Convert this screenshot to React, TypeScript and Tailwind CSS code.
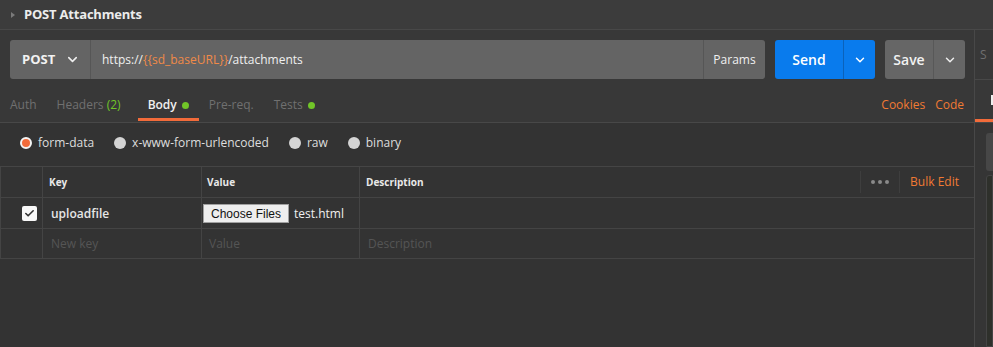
import React from 'react';
import { ChevronDown, Check } from 'lucide-react';

const font = { fontFamily: '"Open Sans", "Liberation Sans", sans-serif' };

const Tab: React.FC<{ label: React.ReactNode; active?: boolean; dot?: boolean; dim?: boolean; extra?: string }> = ({ label, active, dot, dim, extra }) => (
  <div className={`relative flex h-full items-center pl-[10px] ${extra ?? 'pr-[10px]'}`}>
    <span className={`text-[12px] ${active ? 'font-semibold text-[#f0f0f0]' : dim ? 'text-[#707070]' : 'text-[#8c8c8c]'}`}>{label}</span>
    {dot && <span className="ml-[5px] h-[7px] w-[7px] rounded-full bg-[#71c528]" />}
    {active && <span className="absolute bottom-[1px] left-0 right-0 h-[3px] bg-[#f26b3a]" />}
  </div>
);

const Radio: React.FC<{ label: string; on?: boolean }> = ({ label, on }) => (
  <div className="flex items-center gap-[6px]">
    <span
      className={`h-[12px] w-[12px] rounded-full ${on ? 'border-[2px] border-[#f4f4f4] bg-[#f26b3a]' : 'bg-[#d4d4d4]'}`}
    />
    <span className="text-[12px] text-[#dedede]">{label}</span>
  </div>
);

export default function App() {
  return (
    <div className="h-[347px] w-[993px] overflow-hidden bg-[#333333]" style={font}>
      {/* title */}
      <div className="flex h-[30px] items-center border-b border-[#484848] bg-[#3c3c3c] pl-[11px]">
        <span className="mr-[9px] h-0 w-0 border-y-[3px] border-l-[4px] border-y-transparent border-l-[#7a7a7a]" />
        <span className="text-[13px] font-bold tracking-[-0.2px] text-[#ececec]">POST Attachments</span>
      </div>

      <div className="flex h-[317px]">
        {/* main */}
        <div className="flex w-[975px] flex-col border-r border-[#484848]">
          {/* request bar */}
          <div className="flex h-[58px] items-center gap-[10px] bg-[#383838] pl-[10px] pr-[9px] pt-[1px]">
            <div className="flex h-[39px] flex-1 rounded-[3px] bg-[#646464]">
              <div className="flex w-[81px] items-center justify-between border-r border-[#565656] pl-[12px] pr-[10px]">
                <span className="text-[13px] font-bold text-[#f2f2f2]">POST</span>
                <ChevronDown size={15} strokeWidth={2.5} className="text-[#efefef]" />
              </div>
              <div className="flex flex-1 items-center pl-[11px] text-[12px] text-[#f0f0f0]">
                https://<span className="text-[#f08a48]">{'{{sd_baseURL}}'}</span>/attachments
              </div>
              <div className="flex w-[62px] items-center justify-center border-l border-[#565656] text-[12px] text-[#f0f0f0]">
                Params
              </div>
            </div>
            <div className="flex h-[39px] w-[100px] rounded-[3px] bg-[#097bed]">
              <div className="flex w-[69px] items-center justify-center border-r border-[#0a62bb] text-[14px] font-semibold text-white">
                Send
              </div>
              <div className="flex flex-1 items-center justify-center">
                <ChevronDown size={14} strokeWidth={2.5} className="text-white" />
              </div>
            </div>
            <div className="flex h-[39px] w-[80px] rounded-[3px] bg-[#666666]">
              <div className="flex w-[49px] items-center justify-center border-r border-[#585858] text-[14px] font-semibold text-[#f2f2f2]">
                Save
              </div>
              <div className="flex flex-1 items-center justify-center">
                <ChevronDown size={14} strokeWidth={2.5} className="text-[#eeeeee]" />
              </div>
            </div>
          </div>

          {/* tabs */}
          <div className="flex h-[35px] items-stretch border-b border-[#484848] bg-[#383838]">
            <Tab label="Auth" dim />
            <Tab label={<>Headers <span className="text-[#71c528]">(2)</span></>} dim extra="pr-[17px]" />
            <Tab label="Body" active dot />
            <Tab label="Pre-req." dim />
            <Tab label="Tests" dim dot />
            <div className="ml-auto flex items-center gap-[10px] pr-[10px] text-[12px] text-[#f07a33]">
              <span>Cookies</span>
              <span>Code</span>
            </div>
          </div>

          {/* body types */}
          <div className="flex h-[44px] items-center gap-[20px] border-b border-[#454545] pb-[4px] pl-[20px]">
            <Radio label="form-data" on />
            <Radio label="x-www-form-urlencoded" />
            <Radio label="raw" />
            <Radio label="binary" />
          </div>

          {/* table */}
          <div className="grid grid-cols-[42px_159px_158px_1fr] border-l border-[#444444] text-[12px]">
            <div className="h-[31px] border-b border-r border-[#444444]" />
            <div className="flex h-[31px] items-center border-b border-r border-[#444444] pl-[6px] text-[10px] font-bold text-[#e8e8e8]">Key</div>
            <div className="flex h-[31px] items-center border-b border-r border-[#444444] pl-[5px] text-[10px] font-bold text-[#e8e8e8]">Value</div>
            <div className="flex h-[31px] items-center border-b border-[#444444] pl-[6px] text-[10px] font-bold text-[#e8e8e8]">
              <span>Description</span>
              <div className="ml-auto flex h-full items-center pr-[15px]">
                <div className="flex h-[22px] items-center gap-[3px] border-x border-[#3e3e3e] px-[10px]">
                  <span className="h-[4px] w-[4px] rounded-full bg-[#8a8a8a]" />
                  <span className="h-[4px] w-[4px] rounded-full bg-[#8a8a8a]" />
                  <span className="h-[4px] w-[4px] rounded-full bg-[#8a8a8a]" />
                </div>
                <span className="pl-[10px] text-[12px] font-normal text-[#f07a33]">Bulk Edit</span>
              </div>
            </div>

            <div className="flex h-[31px] items-center justify-end border-b border-r border-[#444444] pr-[5px]">
              <span className="flex h-[15px] w-[15px] items-center justify-center rounded-[2px] bg-[#f8f8f8]">
                <Check size={11} strokeWidth={3.5} className="text-[#333333]" />
              </span>
            </div>
            <div className="flex h-[31px] items-center border-b border-r border-[#444444] pl-[8px] pt-[1px] font-semibold text-[#e6e6e6]">uploadfile</div>
            <div className="flex h-[31px] items-center gap-[5px] border-b border-r border-[#444444] pl-[1px] pt-[1px] text-[#f0f0f0]">
              <span
                className="flex h-[19px] items-center border border-[#a0a0a0] bg-[#eeeeee] px-[7px] text-[12px] text-[#111111]"
                style={{ fontFamily: '"Liberation Sans", Arial, sans-serif' }}
              >
                Choose Files
              </span>
              <span>test.html</span>
            </div>
            <div className="h-[31px] border-b border-[#444444]" />

            <div className="h-[30px] border-b border-r border-[#444444]" />
            <div className="flex h-[30px] items-center border-b border-r border-[#444444] pl-[8px] text-[#555555]">New key</div>
            <div className="flex h-[30px] items-center border-b border-r border-[#444444] pl-[7px] text-[#555555]">Value</div>
            <div className="flex h-[30px] items-center border-b border-[#444444] pl-[8px] text-[#555555]">Description</div>
          </div>
          <div className="flex-1" />
        </div>

        {/* right panel */}
        <div className="flex flex-1 flex-col bg-[#353535]">
          <div className="flex h-[50px] items-center border-b border-[#484848] bg-[#383838] pl-[5px] text-[12px] text-[#6f6f6f]">
            S
          </div>
          <div className="relative h-[43px] border-b border-[#484848] bg-[#383838]">
            <span className="absolute bottom-[17px] left-[16px] h-[10px] w-[2px] bg-[#eeeeee]" />
            <span className="absolute bottom-0 left-0 right-0 h-[3px] bg-[#f26b3a]" />
          </div>
          <div className="ml-[11px] mt-[10px] h-[38px] rounded-l-[3px] bg-[#474747]" />
          <div className="ml-[11px] mt-[4px] flex-1 rounded-tl-[3px] border border-[#444444] bg-[#2e302b]" />
        </div>
      </div>
    </div>
  );
}
